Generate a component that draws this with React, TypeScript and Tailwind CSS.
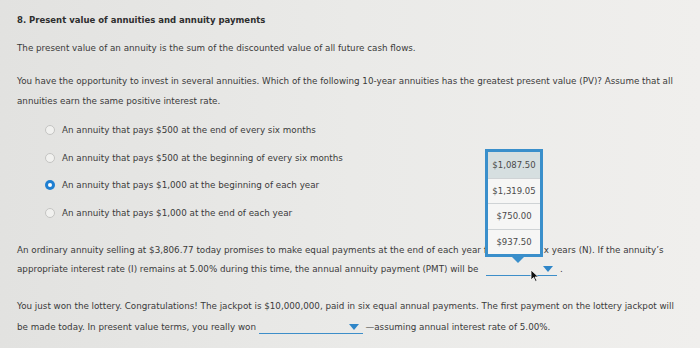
import React from "react";

const font = { fontFamily: '"DejaVu Sans", Verdana, sans-serif' };

function Radio({ checked }: { checked?: boolean }) {
  return checked ? (
    <span className="flex h-[10px] w-[10px] shrink-0 items-center justify-center rounded-full bg-[#1f7fd1]">
      <span className="h-[4px] w-[4px] rounded-full bg-white" />
    </span>
  ) : (
    <span className="h-[10px] w-[10px] shrink-0 rounded-full border border-[#c4c4c2] bg-[#f1f1ef]" />
  );
}

function Caret() {
  return (
    <svg width="10" height="6" viewBox="0 0 10 6" className="absolute right-[4px] top-[4px]">
      <path d="M0 0 H10 L5 6 Z" fill="#2f86c8" />
    </svg>
  );
}

function Select({ w }: { w: string }) {
  return (
    <span className={`relative inline-block h-[14px] align-[-4px] border-b border-[#3d8ec9] ${w}`}>
      <Caret />
    </span>
  );
}

const options = [
  "An annuity that pays $500 at the end of every six months",
  "An annuity that pays $500 at the beginning of every six months",
  "An annuity that pays $1,000 at the beginning of each year",
  "An annuity that pays $1,000 at the end of each year",
];

const items = ["$1,087.50", "$1,319.05", "$750.00", "$937.50"];

export default function App() {
  return (
    <div
      className="relative h-[348px] w-[700px] overflow-hidden whitespace-nowrap bg-gradient-to-r from-[#e2e2e0] via-[#eaeae8] to-[#f0efed] pl-[17px] pt-[10px] text-[8.75px] leading-[20px] text-[#3a3a3a]"
      style={font}
    >
      <div className="text-[8.5px] font-bold text-[#2e2e2e]">8. Present value of annuities and annuity payments</div>
      <div className="mt-[8px]">The present value of an annuity is the sum of the discounted value of all future cash flows.</div>
      <div className="mt-[13px]">
        <div>
          You have the opportunity to invest in several annuities. Which of the following 10-year annuities has the greatest present value (PV)? Assume that all
        </div>
        <div>annuities earn the same positive interest rate.</div>
      </div>
      <div className="mt-[5.5px] flex flex-col pl-[28px]">
        {options.map((o, i) => (
          <div key={o} className="flex h-[27.5px] items-center gap-[7px]">
            <Radio checked={i === 2} />
            <span>{o}</span>
          </div>
        ))}
      </div>
      <div className="mt-[14px] leading-[19.5px]">
        <div>
          An ordinary annuity selling at $3,806.77 today promises to make equal payments at the end of each year f
          <span className="inline-block w-[57px]">or si</span>x years (N). If the annuity’s
        </div>
        <div>
          appropriate interest rate (I) remains at 5.00% during this time, the annual annuity payment (PMT) will be{" "}
          <span className="ml-[5px]">
            <Select w="w-[71px]" />
          </span>{" "}
          .
        </div>
      </div>
      <div className="mt-[16px] leading-[21px]">
        <div>
          You just won the lottery. Congratulations! The jackpot is $10,000,000, paid in six equal annual payments. The first payment on the lottery jackpot will
        </div>
        <div>
          be made today. In present value terms, you really won <Select w="w-[104px]" /> —assuming annual interest rate of 5.00%.
        </div>
      </div>

      {/* open dropdown menu */}
      <div className="absolute left-[485px] top-[149px] w-[58px]">
        <div className="flex flex-col border-[3px] border-[#3a8fcb] bg-[#f6f6f5] text-[8.5px] text-[#4a4a4a]">
          {items.map((it, i) => (
            <div
              key={it}
              className={`flex h-[25.5px] items-center justify-center ${i > 0 ? "border-t border-[#cfd3d5]" : ""} ${
                i === 0 ? "bg-[#d6dfe0]" : ""
              }`}
            >
              {it}
            </div>
          ))}
        </div>
        <svg width="12" height="6" viewBox="0 0 12 6" className="absolute left-[27px] top-full">
          <path d="M0 0 H12 L6 6 Z" fill="#3a8fcb" />
        </svg>
      </div>

      {/* mouse cursor */}
      <svg width="9" height="13" viewBox="0 0 9 13" className="absolute left-[530px] top-[269px]">
        <path d="M1 1 V11 L3.5 8.5 L5.5 12.5 L7 11.8 L5 8 H8.5 Z" fill="#111" stroke="#fff" strokeWidth="0.8" />
      </svg>
    </div>
  );
}
